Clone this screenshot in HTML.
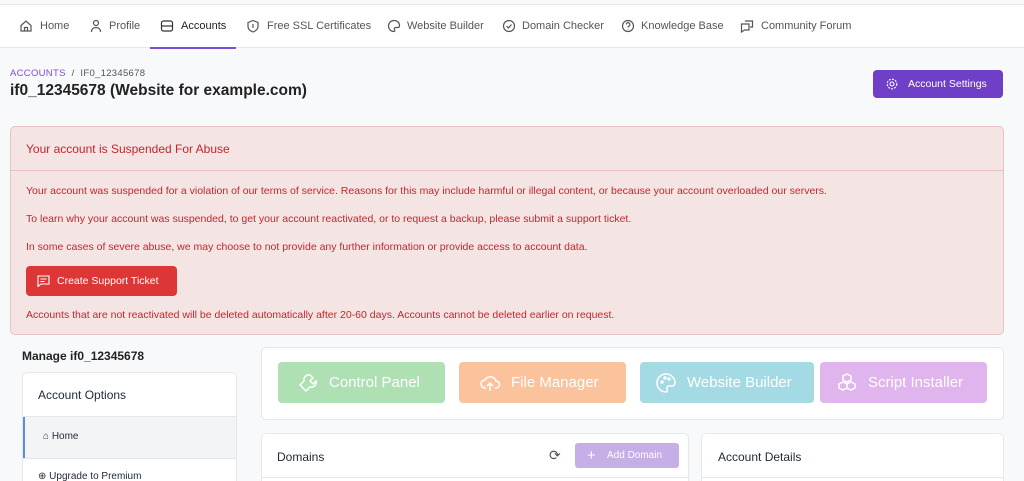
<!DOCTYPE html><html><head><style>
*{box-sizing:border-box;margin:0;padding:0}
html,body{width:1024px;height:481px;overflow:hidden}
body{background:#f8f9fb;font-family:"Liberation Sans",sans-serif;color:#1f2937;position:relative}
.nav{position:absolute;top:4px;left:0;width:1024px;height:44px;background:#fff;border-top:1px solid #e5e7eb;border-bottom:1px solid #e5e7eb}
.nav span{position:absolute;top:15px;font-size:11px;color:#555}
.nav svg{position:absolute;top:14px}
.ab{position:absolute}
.tile{position:absolute;top:362px;height:41px;border-radius:4px;color:#fff;font-size:15px;line-height:41px}
</style></head><body>
<div class="nav">
<svg style="left:19px" width="14" height="14" viewBox="0 0 14 14" fill="none" stroke="#555" stroke-width="1.2"><path d="M2 6.5L7 2l5 4.5V12H2z M5.5 12V8.5h3V12"/></svg><span style="left:40px">Home</span>
<svg style="left:89px" width="14" height="14" viewBox="0 0 14 14" fill="none" stroke="#555" stroke-width="1.2"><circle cx="7" cy="4" r="2.5"/><path d="M2.5 13c0-3 2-4.5 4.5-4.5s4.5 1.5 4.5 4.5"/></svg><span style="left:109px">Profile</span>
<svg style="left:160px" width="14" height="14" viewBox="0 0 14 14" fill="none" stroke="#333" stroke-width="1.2"><rect x="1.5" y="2" width="11" height="10" rx="2"/><path d="M1.5 7h11"/></svg><span style="left:181px;color:#222">Accounts</span>
<div class="ab" style="left:150px;top:42px;width:86px;height:2px;background:#7c4dd6"></div>
<svg style="left:246px" width="14" height="14" viewBox="0 0 14 14" fill="none" stroke="#555" stroke-width="1.2"><path d="M7 1.5l5 2v4c0 3-2.5 4.5-5 5.5-2.5-1-5-2.5-5-5.5v-4z M7 5v4"/></svg><span style="left:267px">Free SSL Certificates</span>
<svg style="left:387px" width="14" height="14" viewBox="0 0 14 14" fill="none" stroke="#555" stroke-width="1.2"><path d="M7 1.5a5.5 5.5 0 100 11c1 0 1-1 .5-2s0-2 1.5-2h2c1 0 1.5-1 1.5-2C12.5 3.5 10 1.5 7 1.5z"/></svg><span style="left:407px">Website Builder</span>
<svg style="left:502px" width="14" height="14" viewBox="0 0 14 14" fill="none" stroke="#555" stroke-width="1.2"><circle cx="7" cy="7" r="5.5"/><path d="M4.5 7l2 2 3-3.5"/></svg><span style="left:522px">Domain Checker</span>
<svg style="left:621px" width="14" height="14" viewBox="0 0 14 14" fill="none" stroke="#555" stroke-width="1.2"><circle cx="7" cy="7" r="5.5"/><path d="M5.3 5.5a1.8 1.8 0 113 1.3c-.8.5-1.3.8-1.3 1.7M7 10v.5"/></svg><span style="left:641px">Knowledge Base</span>
<svg style="left:740px" width="14" height="14" viewBox="0 0 14 14" fill="none" stroke="#555" stroke-width="1.2"><path d="M5 2h7.5v6H10 M1.5 5h7.5v6H4.5l-3 2z"/></svg><span style="left:761px">Community Forum</span>
</div>
<div class="ab" style="left:10px;top:68px;font-size:9.5px;color:#555;letter-spacing:.3px"><span style="color:#7c4dd6">ACCOUNTS</span> &nbsp;/&nbsp; IF0_12345678</div>
<div class="ab" style="left:10px;top:82px;font-size:15.5px;font-weight:bold;color:#222">if0_12345678 (Website for example.com)</div>
<div class="ab" style="left:873px;top:70px;width:130px;height:28px;background:#6f3fc8;border-radius:4px;color:#fff;font-size:10.5px;line-height:28px;padding-left:35px">Account Settings
<svg style="position:absolute;left:13px;top:8px" width="12" height="12" viewBox="0 0 12 12" fill="none" stroke="#fff" stroke-width="1.1"><circle cx="6" cy="6" r="2"/><circle cx="6" cy="6" r="4.8" stroke-dasharray="2 1.2"/></svg></div>
<div class="ab" style="left:10px;top:126px;width:994px;height:209px;background:#f5e4e4;border:1px solid #e6c3c3;border-radius:5px;color:#c2272d">
<div style="height:44px;border-bottom:1px solid #e6c3c3;padding:15px 0 0 15px;font-size:12px">Your account is Suspended For Abuse</div>
<div style="position:absolute;left:15px;top:58px;font-size:10.5px">Your account was suspended for a violation of our terms of service. Reasons for this may include harmful or illegal content, or because your account overloaded our servers.</div>
<div style="position:absolute;left:15px;top:86px;font-size:10.5px">To learn why your account was suspended, to get your account reactivated, or to request a backup, please submit a support ticket.</div>
<div style="position:absolute;left:15px;top:114px;font-size:10.5px">In some cases of severe abuse, we may choose to not provide any further information or provide access to account data.</div>
<div style="position:absolute;left:15px;top:139px;width:151px;height:30px;background:#dc3636;border-radius:4px;color:#fff;font-size:10.5px;line-height:30px;padding-left:31px">Create Support Ticket
<svg style="position:absolute;left:11px;top:9px" width="13" height="12" viewBox="0 0 13 12" fill="none" stroke="#fff" stroke-width="1.1"><path d="M1 1h11v8H4l-3 2.5z M3.5 4h6M3.5 6.5h4"/></svg></div>
<div style="position:absolute;left:15px;top:182px;font-size:10.5px">Accounts that are not reactivated will be deleted automatically after 20-60 days. Accounts cannot be deleted earlier on request.</div>
</div>
<div class="ab" style="left:22px;top:349px;font-size:12px;font-weight:bold;color:#222">Manage if0_12345678</div>
<div class="ab" style="left:22px;top:372px;width:215px;height:120px;background:#fff;border:1px solid #e5e7eb;border-radius:5px;overflow:hidden">
<div style="height:44px;padding:15px 0 0 15px;font-size:12px;border-bottom:1px solid #e5e7eb">Account Options</div>
<div style="height:41px;background:#f3f4f6;border-left:2px solid #5b8fd6;padding:14px 0 0 18px;font-size:10px">⌂ Home</div>
<div style="border-top:1px solid #e5e7eb;padding:12px 0 0 15px;font-size:10px">⊕ Upgrade to Premium</div>
</div>
<div class="ab" style="left:261px;top:347px;width:743px;height:73px;background:#fff;border:1px solid #e5e7eb;border-radius:5px"></div>
<div class="tile" style="left:278px;width:167px;background:#aee0b3;padding-left:51px">Control Panel</div>
<div class="tile" style="left:459px;width:167px;background:#fbc39b;padding-left:52px">File Manager</div>
<div class="tile" style="left:640px;width:174px;background:#a4dae3;padding-left:47px">Website Builder</div>
<div class="tile" style="left:820px;width:167px;background:#e0b4ec;padding-left:48px">Script Installer</div>
<svg class="ab" style="left:297px;top:372px" width="22" height="22" viewBox="0 0 22 22" fill="none" stroke="#fff" stroke-width="1.5"><path d="M13 3a5 5 0 00-6 6L3 13l6 6 4-4a5 5 0 006-6l-3 3-3-3 3-3z"/></svg>
<svg class="ab" style="left:479px;top:372px" width="22" height="22" viewBox="0 0 22 22" fill="none" stroke="#fff" stroke-width="1.5"><path d="M7 16H6a4 4 0 010-8 6 6 0 0111 1 3.5 3.5 0 010 7h-1 M11 19v-8M8 14l3-3 3 3"/></svg>
<svg class="ab" style="left:655px;top:372px" width="22" height="22" viewBox="0 0 22 22" fill="none" stroke="#fff" stroke-width="1.5"><path d="M11 2a9 9 0 100 18c1.5 0 1.5-1.5 1-3s0-3 2-3h3c1.5 0 3-1.5 3-3C20 6 16 2 11 2z"/><circle cx="7" cy="10" r="1"/><circle cx="10" cy="6" r="1"/><circle cx="14" cy="7" r="1"/></svg>
<svg class="ab" style="left:836px;top:372px" width="22" height="22" viewBox="0 0 22 22" fill="none" stroke="#fff" stroke-width="1.5"><path d="M11 2l4 2v4l-4 2-4-2V4z M7 10l4 2v4l-4 2-4-2v-4z M15 10l4 2v4l-4 2-4-2v-4z"/></svg>
<div class="ab" style="left:261px;top:433px;width:428px;height:60px;background:#fff;border:1px solid #e5e7eb;border-radius:5px">
<div style="position:absolute;left:15px;top:16px;font-size:12px">Domains</div>
<div style="position:absolute;left:287px;top:13px;font-size:14px;color:#555">⟳</div>
<div style="position:absolute;left:313px;top:9px;width:104px;height:25px;background:#c6aee6;border-radius:3px;color:#fff;font-size:10px;line-height:25px;padding-left:32px">Add Domain<span style="position:absolute;left:12px;top:0;font-size:15px">+</span></div>
<div style="position:absolute;left:0;top:43px;width:100%;border-top:1px solid #e5e7eb"></div>
</div>
<div class="ab" style="left:701px;top:433px;width:303px;height:60px;background:#fff;border:1px solid #e5e7eb;border-radius:5px">
<div style="position:absolute;left:16px;top:16px;font-size:12px">Account Details</div>
<div style="position:absolute;left:0;top:43px;width:100%;border-top:1px solid #e5e7eb"></div>
</div>
</body></html>
